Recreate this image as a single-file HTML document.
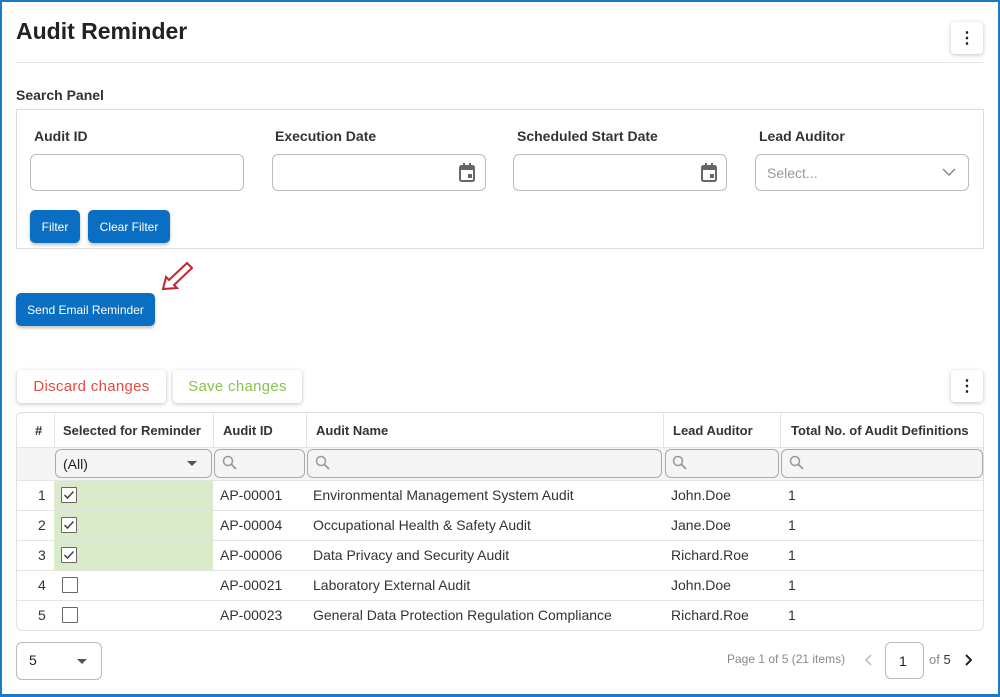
<!DOCTYPE html>
<html><head><meta charset="utf-8"><style>
*{box-sizing:border-box;margin:0;padding:0}
body{width:1000px;height:697px;overflow:hidden;font-family:"Liberation Sans",Arial,sans-serif;background:#fff;position:relative;color:#222}
.frame{position:absolute;left:0;top:0;width:1000px;height:697px;border:2px solid #1a7cc4;border-bottom-width:3px}
.a{position:absolute}
.lbl{font-size:14px;font-weight:bold;color:#333}
.inp{border:1px solid #bbb;border-radius:6px;background:#fff;height:37px}
.btn{background:#0a6fc2;color:#fff;border-radius:5px;font-size:12px;display:flex;align-items:center;justify-content:center;box-shadow:0 2px 3px rgba(0,0,0,.25)}
.wbtn{background:#fff;border-radius:4px;box-shadow:0 1px 4px rgba(0,0,0,.25);display:flex;align-items:center;justify-content:center}
.cell{position:absolute;font-size:14px;display:flex;align-items:center}
.hd{font-weight:bold;color:#333;font-size:13px}
.hl{position:absolute;height:1px;background:#e4e4e4;left:17px;width:966px}
.vl{position:absolute;width:1px;background:#e4e4e4;top:413px;height:34px}
.cb{position:absolute;width:16px;height:16px;border:1.5px solid #666;border-radius:1px;background:#fff}
.fi{position:absolute;top:449px;height:29px;border:1px solid #aaa;border-radius:6px;background:#f5f5f5}
</style></head><body>
<div class="frame"></div>
<div class="a" style="left:16px;top:18px;font-size:23px;font-weight:bold;color:#222">Audit Reminder</div>
<div class="a wbtn" style="left:951px;top:22px;width:32px;height:32px;font-size:16px;font-weight:bold">⋮</div>
<div class="a" style="left:16px;top:62px;width:967px;height:1px;background:#e6e6e6"></div>
<div class="a lbl" style="left:16px;top:87px">Search Panel</div>
<div class="a" style="left:16px;top:109px;width:968px;height:140px;border:1px solid #ddd"></div>
<div class="a lbl" style="left:34px;top:128px">Audit ID</div>
<div class="a lbl" style="left:275px;top:128px">Execution Date</div>
<div class="a lbl" style="left:517px;top:128px">Scheduled Start Date</div>
<div class="a lbl" style="left:759px;top:128px">Lead Auditor</div>
<div class="a inp" style="left:30px;top:154px;width:214px"></div>
<div class="a inp" style="left:272px;top:154px;width:214px"></div>
<div class="a inp" style="left:513px;top:154px;width:214px"></div>
<div class="a inp" style="left:755px;top:154px;width:214px"></div>
<svg class="a" style="left:458px;top:163px" width="18" height="20" viewBox="0 0 18 20"><rect x="2" y="3" width="14" height="15" rx="1.5" fill="none" stroke="#666" stroke-width="2"/><rect x="2" y="3" width="14" height="4" fill="#666"/><rect x="5" y="0" width="2" height="4" fill="#666"/><rect x="11" y="0" width="2" height="4" fill="#666"/><rect x="10" y="11" width="4" height="4" fill="#666"/></svg>
<svg class="a" style="left:700px;top:163px" width="18" height="20" viewBox="0 0 18 20"><rect x="2" y="3" width="14" height="15" rx="1.5" fill="none" stroke="#666" stroke-width="2"/><rect x="2" y="3" width="14" height="4" fill="#666"/><rect x="5" y="0" width="2" height="4" fill="#666"/><rect x="11" y="0" width="2" height="4" fill="#666"/><rect x="10" y="11" width="4" height="4" fill="#666"/></svg>
<div class="a" style="left:767px;top:165px;font-size:14px;color:#999">Select...</div>
<svg class="a" style="left:942px;top:167px" width="14" height="10"><path d="M1 2 L7 8 L13 2" fill="none" stroke="#888" stroke-width="1.5"/></svg>
<div class="a btn" style="left:30px;top:210px;width:50px;height:33px">Filter</div>
<div class="a btn" style="left:88px;top:210px;width:82px;height:33px">Clear Filter</div>
<svg class="a" style="left:160px;top:260px" width="36" height="32" viewBox="0 0 36 32"><path d="M3 29 L6 17 L9 20 L27 3 L32 8 L14 25 L17 28 Z" fill="none" stroke="#c0262d" stroke-width="2" stroke-linejoin="miter"/></svg>
<div class="a btn" style="left:16px;top:293px;width:139px;height:33px">Send Email Reminder</div>
<div class="a wbtn" style="left:17px;top:370px;width:149px;height:33px;color:#e84a3f;font-size:15px;letter-spacing:.3px">Discard changes</div>
<div class="a wbtn" style="left:173px;top:370px;width:129px;height:33px;color:#8cc152;font-size:15px;letter-spacing:.3px">Save changes</div>
<div class="a wbtn" style="left:951px;top:370px;width:32px;height:32px;font-size:16px;font-weight:bold">⋮</div>
<div class="a" style="left:16px;top:412px;width:968px;height:219px;border:1px solid #e0e0e0;border-radius:6px"></div>
<div class="a" style="left:17px;top:447px;width:966px;height:33px;background:#f5f5f5"></div>
<div class="a" style="left:54px;top:480px;width:159px;height:90px;background:#d9ebc8"></div>
<div class="vl" style="left:54px"></div><div class="vl" style="left:213px"></div><div class="vl" style="left:306px"></div><div class="vl" style="left:663px"></div><div class="vl" style="left:780px"></div>
<div class="hl" style="top:447px"></div><div class="hl" style="top:480px"></div><div class="hl" style="top:510px"></div><div class="hl" style="top:540px"></div><div class="hl" style="top:570px"></div><div class="hl" style="top:600px"></div>
<div class="cell hd" style="left:35px;top:413px;height:34px">#</div>
<div class="cell hd" style="left:63px;top:413px;height:34px">Selected for Reminder</div>
<div class="cell hd" style="left:223px;top:413px;height:34px">Audit ID</div>
<div class="cell hd" style="left:316px;top:413px;height:34px">Audit Name</div>
<div class="cell hd" style="left:673px;top:413px;height:34px">Lead Auditor</div>
<div class="cell hd" style="left:791px;top:413px;height:34px">Total No. of Audit Definitions</div>
<div class="fi" style="left:55px;width:157px;background:#f5f5f5"></div>
<div class="cell" style="left:63px;top:449px;height:29px">(All)</div>
<svg class="a" style="left:187px;top:461px" width="10" height="6"><path d="M0 0 H10 L5 5Z" fill="#555"/></svg>
<div class="fi" style="left:214px;width:91px"></div>
<div class="fi" style="left:307px;width:355px"></div>
<div class="fi" style="left:665px;width:114px"></div>
<div class="fi" style="left:781px;width:202px"></div>
<svg class="a" style="left:222px;top:455px" width="16" height="16"><circle cx="6" cy="6" r="4.5" fill="none" stroke="#999" stroke-width="1.5"/><path d="M9.5 9.5 L14 14" stroke="#999" stroke-width="1.8"/></svg>
<svg class="a" style="left:315px;top:455px" width="16" height="16"><circle cx="6" cy="6" r="4.5" fill="none" stroke="#999" stroke-width="1.5"/><path d="M9.5 9.5 L14 14" stroke="#999" stroke-width="1.8"/></svg>
<svg class="a" style="left:672px;top:455px" width="16" height="16"><circle cx="6" cy="6" r="4.5" fill="none" stroke="#999" stroke-width="1.5"/><path d="M9.5 9.5 L14 14" stroke="#999" stroke-width="1.8"/></svg>
<svg class="a" style="left:789px;top:455px" width="16" height="16"><circle cx="6" cy="6" r="4.5" fill="none" stroke="#999" stroke-width="1.5"/><path d="M9.5 9.5 L14 14" stroke="#999" stroke-width="1.8"/></svg>

<div style="font-size:14px;color:#333">
<div class="cell" style="left:38px;top:480px;height:30px">1</div><div class="cell" style="left:220px;top:480px;height:30px">AP-00001</div><div class="cell" style="left:313px;top:480px;height:30px">Environmental Management System Audit</div><div class="cell" style="left:671px;top:480px;height:30px">John.Doe</div><div class="cell" style="left:788px;top:480px;height:30px">1</div>
<div class="cell" style="left:38px;top:510px;height:30px">2</div><div class="cell" style="left:220px;top:510px;height:30px">AP-00004</div><div class="cell" style="left:313px;top:510px;height:30px">Occupational Health &amp; Safety Audit</div><div class="cell" style="left:671px;top:510px;height:30px">Jane.Doe</div><div class="cell" style="left:788px;top:510px;height:30px">1</div>
<div class="cell" style="left:38px;top:540px;height:30px">3</div><div class="cell" style="left:220px;top:540px;height:30px">AP-00006</div><div class="cell" style="left:313px;top:540px;height:30px">Data Privacy and Security Audit</div><div class="cell" style="left:671px;top:540px;height:30px">Richard.Roe</div><div class="cell" style="left:788px;top:540px;height:30px">1</div>
<div class="cell" style="left:38px;top:570px;height:30px">4</div><div class="cell" style="left:220px;top:570px;height:30px">AP-00021</div><div class="cell" style="left:313px;top:570px;height:30px">Laboratory External Audit</div><div class="cell" style="left:671px;top:570px;height:30px">John.Doe</div><div class="cell" style="left:788px;top:570px;height:30px">1</div>
<div class="cell" style="left:38px;top:600px;height:30px">5</div><div class="cell" style="left:220px;top:600px;height:30px">AP-00023</div><div class="cell" style="left:313px;top:600px;height:30px">General Data Protection Regulation Compliance</div><div class="cell" style="left:671px;top:600px;height:30px">Richard.Roe</div><div class="cell" style="left:788px;top:600px;height:30px">1</div>
</div>
<div class="cb" style="left:61px;top:487px"><svg width="14" height="14" style="position:absolute;left:0;top:0"><path d="M2.5 7 L5.5 10 L11.5 3.5" fill="none" stroke="#444" stroke-width="1.5"/></svg></div>
<div class="cb" style="left:61px;top:517px"><svg width="14" height="14" style="position:absolute;left:0;top:0"><path d="M2.5 7 L5.5 10 L11.5 3.5" fill="none" stroke="#444" stroke-width="1.5"/></svg></div>
<div class="cb" style="left:61px;top:547px"><svg width="14" height="14" style="position:absolute;left:0;top:0"><path d="M2.5 7 L5.5 10 L11.5 3.5" fill="none" stroke="#444" stroke-width="1.5"/></svg></div>
<div class="cb" style="left:62px;top:577px"></div>
<div class="cb" style="left:62px;top:607px"></div>

<div class="a" style="left:16px;top:642px;width:86px;height:38px;border:1px solid #bbb;border-radius:6px"></div>
<div class="a" style="left:29px;top:652px;font-size:14px">5</div>
<svg class="a" style="left:77px;top:659px" width="10" height="6"><path d="M0 0 H10 L5 5Z" fill="#555"/></svg>
<div class="a" style="left:727px;top:652px;font-size:12px;color:#888">Page 1 of 5 (21 items)</div>
<svg class="a" style="left:865px;top:654px" width="8" height="12"><path d="M6 1 L1 6 L6 11" fill="none" stroke="#bbb" stroke-width="1.5"/></svg>
<div class="a" style="left:885px;top:642px;width:39px;height:37px;border:1px solid #bbb;border-radius:6px;font-size:14px;display:flex;align-items:center;padding-left:13px">1</div>
<div class="a" style="left:929px;top:652px;font-size:13px;color:#888">of <span style="color:#333">5</span></div>
<svg class="a" style="left:964px;top:654px" width="8" height="12"><path d="M2 1 L7 6 L2 11" fill="none" stroke="#222" stroke-width="2"/></svg>
</body></html>
